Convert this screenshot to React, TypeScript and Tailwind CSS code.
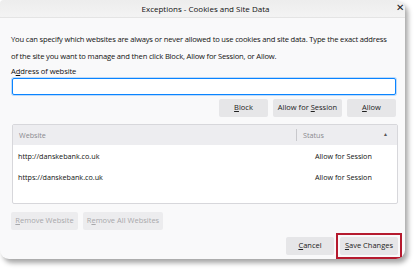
import React from "react";

const font = { fontFamily: '"Open Sans", "Noto Sans", sans-serif' };

function Btn({ children, className = "" }: { children: React.ReactNode; className?: string }) {
  return (
    <div
      className={`flex items-center justify-center h-[18px] rounded-[2px] bg-[#e6e6e8] text-[7.5px] text-[#222] ${className}`}
    >
      {children}
    </div>
  );
}

export default function App() {
  return (
    <div className="w-[415px] h-[269px] bg-white overflow-hidden" style={font}>
      <div className="w-[405px] h-[259px] rounded-[9px] rounded-tl-[4px] bg-[#f9f9fa] shadow-[3px_4px_5px_rgba(0,0,0,0.35)] flex flex-col overflow-hidden">
        {/* title bar */}
        <div className="relative h-[20px] bg-gradient-to-b from-[#ededed] to-[#f3f3f3] border-b border-[#e4e4e4] flex items-center justify-center">
          <span className="text-[8px] text-[#111] pl-[6px]">Exceptions - Cookies and Site Data</span>
          <span className="absolute right-[1px] top-[2px] text-[10px] text-[#222] leading-none">✕</span>
        </div>

        <div className="flex flex-col pl-[11px] pr-[8px] pt-[13px]">
          <p className="text-[7.6px] leading-[17px] text-[#111] tracking-[-0.18px] whitespace-nowrap">
            You can specify which websites are always or never allowed to use cookies and site data. Type the exact
            address
            <br />
            of the site you want to manage and then click Block, Allow for Session, or Allow.
          </p>
          <div className="mt-[1px] text-[7.6px] leading-[10px] text-[#111] tracking-[-0.1px]">
            A<span className="underline">d</span>dress of website
          </div>
          <div className="mt-[2px] ml-[1px] w-[384px] h-[17px] rounded-[2px] border border-[#0a84ff] bg-white shadow-[0_0_0_1px_rgba(10,132,255,0.25)]" />

          <div className="mt-[4px] flex justify-end gap-[5px] pr-[1px]">
            <Btn className="w-[49px]">
              <span className="underline">B</span>lock
            </Btn>
            <Btn className="w-[69px]">
              Allow for&nbsp;<span className="underline">S</span>ession
            </Btn>
            <Btn className="w-[49px]">
              <span className="underline">A</span>llow
            </Btn>
          </div>

          {/* table */}
          <div className="mt-[7px] ml-[1px] w-[386px] h-[80px] border border-[#d7d7db] rounded-[2px] bg-white flex flex-col">
            <div className="h-[20px] bg-[#ededf0] flex items-center text-[7.2px] text-[#8a8a8f]">
              <div className="flex-1 pl-[6px]">Website</div>
              <div className="w-[1px] h-[12px] bg-[#c8c8cc]" />
              <div className="w-[100px] pl-[6px] flex items-center justify-between pr-[9px]">
                <span>Status</span>
                <span className="text-[5px] text-[#555]">▲</span>
              </div>
            </div>
            <div className="flex flex-col text-[7.2px] text-[#111] pt-[1px]">
              <div className="h-[21px] flex items-center">
                <div className="flex-1 pl-[5px]">http://danskebank.co.uk</div>
                <div className="w-[82px]">Allow for Session</div>
              </div>
              <div className="h-[21px] flex items-center">
                <div className="flex-1 pl-[5px]">https://danskebank.co.uk</div>
                <div className="w-[82px]">Allow for Session</div>
              </div>
            </div>
          </div>

          <div className="mt-[8px] flex gap-[5px]">
            <Btn className="w-[67px] bg-[#ececee] text-[#a8a8ab]">
              <span className="underline">R</span>emove Website
            </Btn>
            <Btn className="w-[80px] bg-[#ececee] text-[#a8a8ab]">
              R<span className="underline">e</span>move All Websites
            </Btn>
          </div>

          <div className="mt-[3px] -mr-[5px] flex justify-end items-center gap-[2px]">
            <Btn className="w-[48px]">
              <span className="underline">C</span>ancel
            </Btn>
            <div className="p-[2px] border-2 border-[#b51a2e]">
              <Btn className="w-[58px] h-[17px]">
                <span className="underline">S</span>ave Changes
              </Btn>
            </div>
          </div>
        </div>
      </div>
    </div>
  );
}
